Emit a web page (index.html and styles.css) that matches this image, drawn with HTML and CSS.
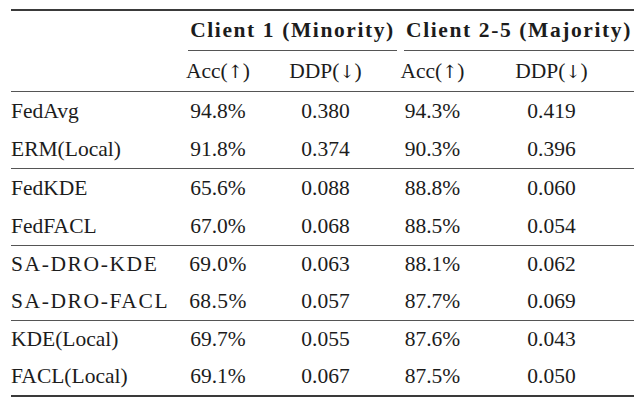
FILE: index.html
```html
<!DOCTYPE html>
<html>
<head>
<meta charset="utf-8">
<link rel="stylesheet" href="styles.css">
</head>
<body>
<div class="page">
<table class="results">
  <colgroup>
    <col class="c-method"><col class="c-acc1"><col class="c-ddp1"><col class="c-acc2"><col class="c-ddp2">
  </colgroup>
  <thead>
    <tr class="group-row">
      <th></th>
      <th colspan="2"><div class="group first">Client 1 (Minority)</div></th>
      <th colspan="2"><div class="group second">Client 2-5 (Majority)</div></th>
    </tr>
    <tr class="metric-row">
      <th></th>
      <th>Acc(<span class="arrow">↑</span>)</th><th>DDP(<span class="arrow">↓</span>)</th><th>Acc(<span class="arrow">↑</span>)</th><th>DDP(<span class="arrow">↓</span>)</th>
    </tr>
  </thead>
  <tbody>
    <tr><td>FedAvg</td><td>94.8%</td><td>0.380</td><td>94.3%</td><td>0.419</td></tr>
    <tr><td>ERM(Local)</td><td>91.8%</td><td>0.374</td><td>90.3%</td><td>0.396</td></tr>
  </tbody>
  <tbody>
    <tr><td>FedKDE</td><td>65.6%</td><td>0.088</td><td>88.8%</td><td>0.060</td></tr>
    <tr><td>FedFACL</td><td>67.0%</td><td>0.068</td><td>88.5%</td><td>0.054</td></tr>
  </tbody>
  <tbody class="short">
    <tr><td class="bold">SA-DRO-KDE</td><td class="bold num">69.0%</td><td>0.063</td><td>88.1%</td><td>0.062</td></tr>
    <tr><td class="bold">SA-DRO-FACL</td><td class="bold num">68.5%</td><td>0.057</td><td>87.7%</td><td>0.069</td></tr>
  </tbody>
  <tbody class="short last">
    <tr><td>KDE(Local)</td><td>69.7%</td><td>0.055</td><td>87.6%</td><td>0.043</td></tr>
    <tr><td>FACL(Local)</td><td>69.1%</td><td>0.067</td><td>87.5%</td><td>0.050</td></tr>
  </tbody>
</table>
</div>
</body>
</html>
```

FILE: styles.css
```css
html, body {
  margin: 0;
  padding: 0;
  background: #ffffff;
}

.page {
  padding: 9px 0 0 11px;
}

.results {
  border-collapse: separate;
  border-spacing: 0;
  table-layout: fixed;
  width: 623px;
  font-family: "Liberation Serif", "Times New Roman", serif;
  font-size: 21.5px;
  color: #1c1c1c;
  border-top: 2px solid #3a3a3a;
  border-bottom: 2px solid #3a3a3a;
}

.c-method { width: 170px; }
.c-acc1 { width: 74px; }
.c-ddp1 { width: 141px; }
.c-acc2 { width: 73px; }
.c-ddp2 { width: 165px; }

.results th,
.results td {
  padding: 0;
  text-align: center;
  font-weight: normal;
  white-space: nowrap;
  vertical-align: middle;
}

.results td:first-child,
.results th:first-child {
  text-align: left;
}

.group-row th {
  height: 40px;
  vertical-align: bottom;
}

.group {
  font-weight: bold;
  letter-spacing: 1.6px;
  line-height: 39px;
  border-bottom: 1px solid #555555;
  text-align: center;
}

.group.first {
  margin-left: 7px;
  margin-right: -1px;
}

.group.second {
  margin-left: 8px;
}

.metric-row th {
  height: 40px;
  border-bottom: 1px solid #555555;
}

.arrow {
  font-family: "DejaVu Serif", serif;
  font-size: 18px;
}

tbody td {
  height: 38px;
}

tbody + tbody tr:first-child td {
  border-top: 1px solid #555555;
}

tbody.short td {
  height: 37px;
}

.bold {
  font-weight: bold;
  letter-spacing: 1.6px;
}

.bold.num {
  letter-spacing: 0.4px;
}
```
